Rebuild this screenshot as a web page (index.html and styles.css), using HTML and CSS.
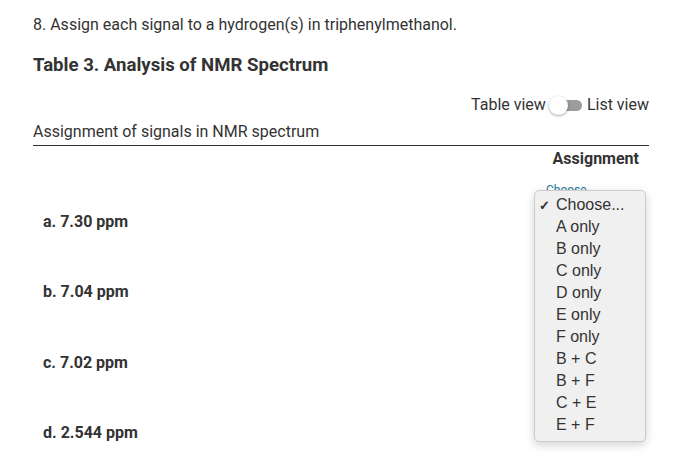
FILE: index.html
```html
<!DOCTYPE html>
<html>
<head>
<meta charset="utf-8">
<link rel="stylesheet" href="styles.css">
</head>
<body>
<div class="page">
  <p class="question">8. Assign each signal to a hydrogen(s) in triphenylmethanol.</p>
  <h2 class="table-title">Table 3. Analysis of NMR Spectrum</h2>
  <div class="view-toggle">
    <span>Table view</span>
    <span class="switch"><span class="knob"></span></span>
    <span>List view</span>
  </div>
  <div class="caption">Assignment of signals in NMR spectrum</div>
  <div class="col-head">Assignment</div>
  <div class="rows">
    <div class="row"><span class="label">a. 7.30 ppm</span><span class="select">Choose...</span></div>
    <div class="row"><span class="label">b. 7.04 ppm</span></div>
    <div class="row"><span class="label">c. 7.02 ppm</span></div>
    <div class="row"><span class="label">d. 2.544 ppm</span></div>
  </div>
  <ul class="menu">
    <li class="checked">Choose...</li>
    <li>A only</li>
    <li>B only</li>
    <li>C only</li>
    <li>D only</li>
    <li>E only</li>
    <li>F only</li>
    <li>B + C</li>
    <li>B + F</li>
    <li>C + E</li>
    <li>E + F</li>
  </ul>
</div>
</body>
</html>
```
FILE: styles.css
```css
html, body {
  margin: 0;
  padding: 0;
  background: #fff;
}
.page {
  position: relative;
  width: 616px;
  padding: 15px 0 0 33px;
  font-family: Roboto, "Liberation Sans", sans-serif;
  color: #333;
}
.question {
  margin: 0;
  font-size: 16px;
  line-height: 20px;
}
.table-title {
  margin: 19px 0 0;
  font-size: 18.6px;
  line-height: 22px;
  font-weight: 700;
}
.view-toggle {
  display: flex;
  justify-content: flex-end;
  align-items: center;
  margin-top: 19px;
  font-size: 16px;
  line-height: 20px;
}
.switch {
  position: relative;
  width: 28px;
  height: 11px;
  margin: 0 5px 0 8px;
  border-radius: 6px;
  background: #9c9c9c;
}
.knob {
  position: absolute;
  left: -5px;
  top: -4px;
  width: 19px;
  height: 19px;
  border-radius: 50%;
  background: #fff;
  box-shadow: 0 1px 3px rgba(0,0,0,0.35);
}
.caption {
  margin-top: 7px;
  font-size: 16px;
  line-height: 20px;
  padding-bottom: 3px;
  border-bottom: 1.5px solid #333;
}
.col-head {
  text-align: right;
  padding-right: 10px;
  margin-top: 3px;
  font-size: 16px;
  font-weight: 700;
  line-height: 20px;
}
.rows {
  margin-top: 11px;
}
.row {
  position: relative;
  display: flex;
  align-items: flex-start;
  height: 70.3px;
  font-size: 16px;
  font-weight: 700;
}
.label {
  padding: 32px 0 0 10px;
  line-height: 20px;
}
.select {
  position: absolute;
  left: 513px;
  top: 3px;
  font-weight: 400;
  font-size: 12px;
  color: #1d7a9a;
  line-height: 14px;
}
.menu {
  position: absolute;
  left: 534px;
  top: 190px;
  width: 110px;
  margin: 0;
  padding: 3px 0 5px;
  list-style: none;
  background: #f0f0f0;
  border: 1px solid #cbcbcb;
  border-radius: 5px;
  box-shadow: 0 3px 10px rgba(0,0,0,0.18);
  font-family: "Liberation Sans", Arial, sans-serif;
  font-size: 16px;
  line-height: 22px;
  color: #333;
}
.menu li {
  padding-left: 21px;
  position: relative;
}
.menu li.checked::before {
  content: "\2713";
  position: absolute;
  left: 4px;
  top: 1px;
  font-size: 13px;
  font-weight: 700;
}
```
